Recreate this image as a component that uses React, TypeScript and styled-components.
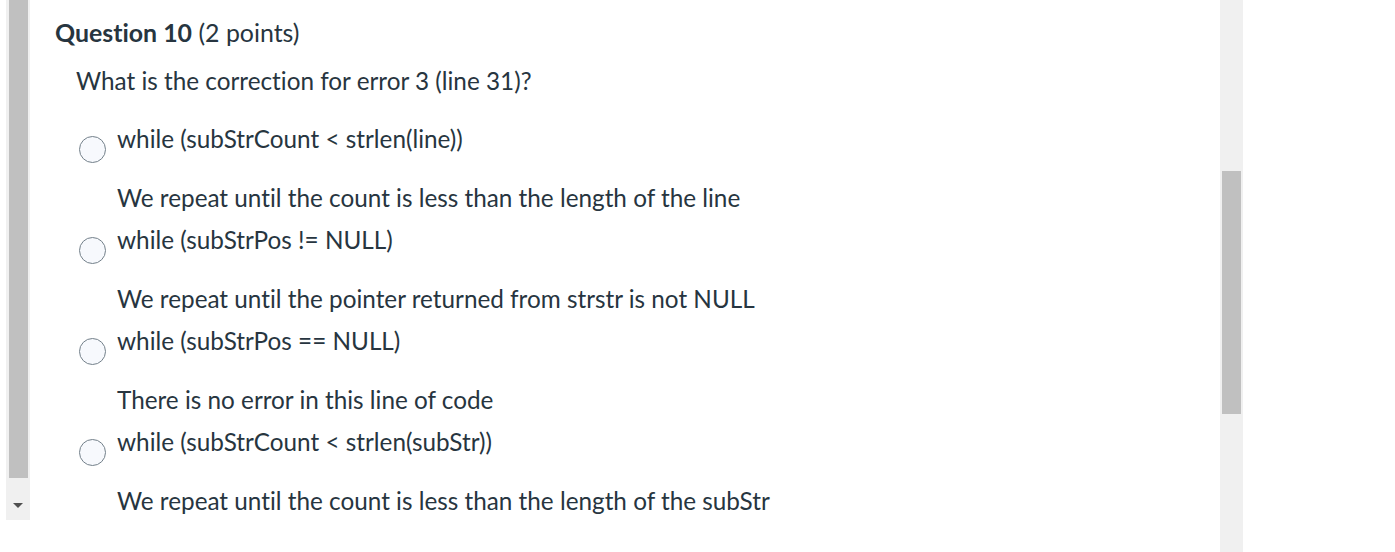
import React from "react";
import styled, { createGlobalStyle } from "styled-components";

const Global = createGlobalStyle`
  html, body { margin: 0; padding: 0; background: #ffffff; }
  body {
    font-family: Lato, "Open Sans", sans-serif;
    color: #273540;
    font-variant-ligatures: none;
    font-feature-settings: "liga" 0, "clig" 0;
  }
`;

const Page = styled.div`
  display: flex;
  width: 1395px;
  height: 552px;
  overflow: hidden;
  background: #fff;
`;

const LeftRail = styled.div`
  margin-left: 6px;
  width: 24px;
  height: 520px;
  background: #f0f0f0;
  display: flex;
  flex-direction: column;
  align-items: center;
  flex-shrink: 0;
`;

const LeftThumb = styled.div`
  width: 19px;
  height: 478px;
  background: #c0c0c0;
`;

const Arrow = styled.div`
  margin-top: 25px;
  width: 0;
  height: 0;
  border-left: 5px solid transparent;
  border-right: 5px solid transparent;
  border-top: 5px solid #505050;
`;

const Main = styled.div`
  width: 1190px;
  flex-shrink: 0;
  padding: 16px 0 0 25px;
  box-sizing: border-box;
`;

const Heading = styled.h2`
  margin: 0;
  font-size: 24.9px;
  font-weight: 400;
  line-height: 32px;
  color: #273540;
  b { font-weight: 700; }
`;

const Prompt = styled.p`
  margin: 17px 0 0 21px;
  font-size: 24.3px;
  line-height: 32px;
`;

const Options = styled.div`
  margin: 26px 0 0 24px;
  display: flex;
  flex-direction: column;
`;

const Option = styled.label`
  display: grid;
  grid-template-columns: 38px 1fr;
  height: 101px;
`;

const Radio = styled.span`
  margin-top: 13px;
  width: 27px;
  height: 27px;
  border-radius: 50%;
  border: 1px solid #73808a;
  background: #f7f9fd;
  box-sizing: border-box;
`;

const Texts = styled.div`
  display: flex;
  flex-direction: column;
`;

const Code = styled.div`
  font-size: 24.3px;
  line-height: 32px;
`;

const Desc = styled.div`
  margin-top: 27px;
  font-size: 24.3px;
  line-height: 32px;
`;

const RightRail = styled.div`
  width: 23px;
  height: 552px;
  background: #f0f0f0;
  display: flex;
  justify-content: center;
  padding-top: 171px;
  box-sizing: border-box;
  flex-shrink: 0;
`;

const RightThumb = styled.div`
  width: 19px;
  height: 243px;
  background: #c0c0c0;
`;

const options = [
  ["while (subStrCount < strlen(line))", "We repeat until the count is less than the length of the line"],
  ["while (subStrPos != NULL)", "We repeat until the pointer returned from strstr is not NULL"],
  ["while (subStrPos == NULL)", "There is no error in this line of code"],
  ["while (subStrCount < strlen(subStr))", "We repeat until the count is less than the length of the subStr"],
];

export default function App() {
  return (
    <>
      <Global />
      <Page>
        <LeftRail>
          <LeftThumb />
          <Arrow />
        </LeftRail>
        <Main>
          <Heading>
            <b>Question 10</b> (2 points)
          </Heading>
          <Prompt>What is the correction for error 3 (line 31)?</Prompt>
          <Options>
            {options.map(([c, d]) => (
              <Option key={c}>
                <Radio />
                <Texts>
                  <Code>{c}</Code>
                  <Desc>{d}</Desc>
                </Texts>
              </Option>
            ))}
          </Options>
        </Main>
        <RightRail>
          <RightThumb />
        </RightRail>
      </Page>
    </>
  );
}
